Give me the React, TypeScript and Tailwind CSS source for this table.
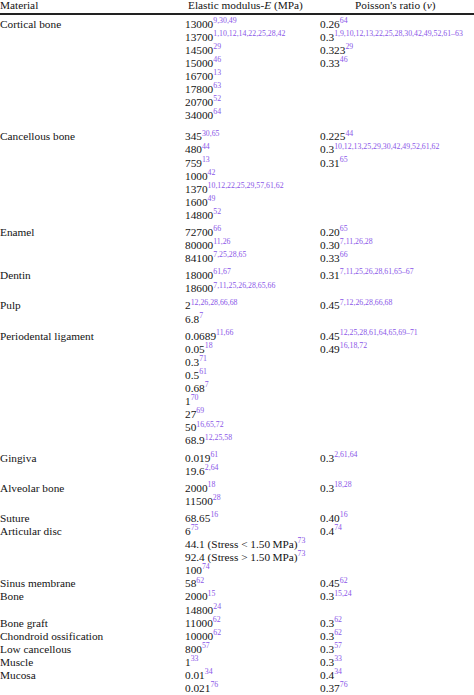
import React from "react";

type Val = [string, string];
type Row = { m: string; e: Val[]; v: Val[]; gap?: string };

const rows: Row[] = [
  {
    m: "Cortical bone",
    e: [
      ["13000", "9,30,49"],
      ["13700", "1,10,12,14,22,25,28,42"],
      ["14500", "29"],
      ["15000", "46"],
      ["16700", "13"],
      ["17800", "63"],
      ["20700", "52"],
      ["34000", "64"],
    ],
    v: [
      ["0.26", "64"],
      ["0.3", "1,9,10,12,13,22,25,28,30,42,49,52,61–63"],
      ["0.323", "29"],
      ["0.33", "46"],
    ],
    gap: "pb-[8px]",
  },
  {
    m: "Cancellous bone",
    e: [
      ["345", "30,65"],
      ["480", "44"],
      ["759", "13"],
      ["1000", "42"],
      ["1370", "10,12,22,25,29,57,61,62"],
      ["1600", "49"],
      ["14800", "52"],
    ],
    v: [
      ["0.225", "44"],
      ["0.3", "10,12,13,25,29,30,42,49,52,61,62"],
      ["0.31", "65"],
    ],
    gap: "pb-[4px]",
  },
  {
    m: "Enamel",
    e: [
      ["72700", "66"],
      ["80000", "11,26"],
      ["84100", "7,25,28,65"],
    ],
    v: [
      ["0.20", "65"],
      ["0.30", "7,11,26,28"],
      ["0.33", "66"],
    ],
    gap: "pb-[4px]",
  },
  {
    m: "Dentin",
    e: [
      ["18000", "61,67"],
      ["18600", "7,11,25,26,28,65,66"],
    ],
    v: [["0.31", "7,11,25,26,28,61,65–67"]],
    gap: "pb-[4px]",
  },
  {
    m: "Pulp",
    e: [
      ["2", "12,26,28,66,68"],
      ["6.8", "7"],
    ],
    v: [["0.45", "7,12,26,28,66,68"]],
    gap: "pb-[4px]",
  },
  {
    m: "Periodental ligament",
    e: [
      ["0.0689", "11,66"],
      ["0.05", "18"],
      ["0.3", "71"],
      ["0.5", "61"],
      ["0.68", "7"],
      ["1", "70"],
      ["27", "69"],
      ["50", "16,65,72"],
      ["68.9", "12,25,58"],
    ],
    v: [
      ["0.45", "12,25,28,61,64,65,69–71"],
      ["0.49", "16,18,72"],
    ],
    gap: "pb-[4px]",
  },
  {
    m: "Gingiva",
    e: [
      ["0.019", "61"],
      ["19.6", "2,64"],
    ],
    v: [["0.3", "2,61,64"]],
    gap: "pb-[4px]",
  },
  {
    m: "Alveolar bone",
    e: [
      ["2000", "18"],
      ["11500", "28"],
    ],
    v: [["0.3", "18,28"]],
    gap: "pb-[4px]",
  },
  { m: "Suture", e: [["68.65", "16"]], v: [["0.40", "16"]] },
  {
    m: "Articular disc",
    e: [
      ["6", "75"],
      ["44.1 (Stress < 1.50\u2009MPa)", "73"],
      ["92.4 (Stress > 1.50\u2009MPa)", "73"],
      ["100", "74"],
    ],
    v: [["0.4", "74"]],
  },
  { m: "Sinus membrane", e: [["58", "62"]], v: [["0.45", "62"]] },
  {
    m: "Bone",
    e: [
      ["2000", "15"],
      ["14800", "24"],
    ],
    v: [["0.3", "15,24"]],
  },
  { m: "Bone graft", e: [["11000", "62"]], v: [["0.3", "62"]] },
  { m: "Chondroid ossification", e: [["10000", "62"]], v: [["0.3", "62"]] },
  { m: "Low cancellous", e: [["800", "57"]], v: [["0.3", "57"]] },
  { m: "Muscle", e: [["1", "33"]], v: [["0.3", "33"]] },
  {
    m: "Mucosa",
    e: [
      ["0.01", "34"],
      ["0.021", "76"],
    ],
    v: [
      ["0.4", "34"],
      ["0.37", "76"],
    ],
  },
];

function Cite({ val }: { val: Val }) {
  return (
    <div>
      {val[0]}
      <sup className="text-[7.8px] -top-[4.8px] text-[#8a56e8]">{val[1]}</sup>
    </div>
  );
}

export default function App() {
  return (
    <div className="w-[474px] h-[695px] overflow-hidden bg-white text-[#141414] font-['Liberation_Serif',serif] text-[11.3px] leading-[13.1px] whitespace-nowrap">
      <div className="grid grid-cols-[185px_135px_auto] -mt-[1px]">
        <div>Material</div>
        <div className="pl-[3px]">
          Elastic modulus-<i>E</i> (MPa)
        </div>
        <div className="pl-[35px]">
          Poisson's ratio (<i>ν</i>)
        </div>
      </div>
      <div className="h-[1.5px] bg-[#222] mt-[1px] mb-[3px]" />
      {rows.map((r, i) => (
        <div
          key={i}
          className={`grid grid-cols-[185px_135px_auto] ${r.gap ?? ""}`}
        >
          <div>{r.m}</div>
          <div>
            {r.e.map((x, j) => (
              <Cite key={j} val={x} />
            ))}
          </div>
          <div>
            {r.v.map((x, j) => (
              <Cite key={j} val={x} />
            ))}
          </div>
        </div>
      ))}
    </div>
  );
}
